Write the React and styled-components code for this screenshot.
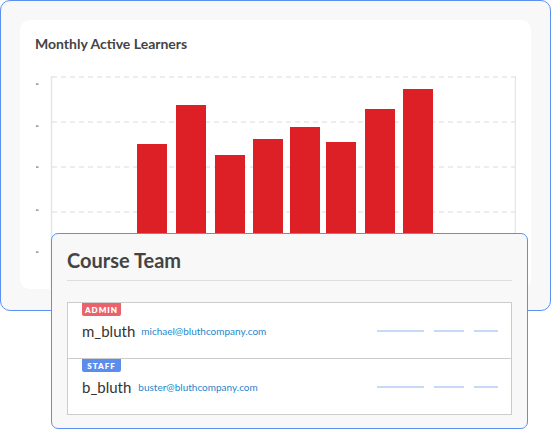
import React from "react";
import styled, { createGlobalStyle } from "styled-components";

const GlobalStyle = createGlobalStyle`
  html, body {
    margin: 0;
    padding: 0;
    background: #ffffff;
    font-family: Lato, "Open Sans", sans-serif;
  }
`;

const Page = styled.div`
  position: relative;
  width: 551px;
  height: 429px;
  overflow: hidden;
`;

const OuterCard = styled.div`
  box-sizing: border-box;
  width: 551px;
  height: 311px;
  padding: 19px;
  background: #f8f8f8;
  border: 1px solid #5b8ff0;
  border-radius: 10px;
`;

const ChartCard = styled.div`
  box-sizing: border-box;
  width: 511px;
  height: 269px;
  padding: 15px 15px 0;
  background: #ffffff;
  border-radius: 10px;
  overflow: hidden;
`;

const ChartTitle = styled.h3`
  margin: 0;
  font-size: 14px;
  line-height: 18px;
  font-weight: 700;
  color: #444444;
`;

const ChartSvg = styled.svg`
  display: block;
  margin-top: 16px;
`;

const TeamCard = styled.div`
  position: absolute;
  left: 51px;
  top: 233px;
  box-sizing: border-box;
  width: 477px;
  height: 196px;
  padding: 0 15px;
  background: #f8f8f8;
  border: 1px solid #5b8ff0;
  border-radius: 7px;
`;

const TeamTitle = styled.h2`
  margin: 0;
  padding: 15px 0 8px;
  font-size: 20px;
  line-height: 23px;
  font-weight: 700;
  color: #444444;
  border-bottom: 1px solid #dddddd;
`;

const Table = styled.div`
  margin-top: 21px;
  background: #ffffff;
  border: 1px solid #cccccc;
`;

const Row = styled.div`
  box-sizing: border-box;
  height: ${(p) => p.$h}px;
  padding: 0 13px 0 14px;
  border-top: ${(p) => (p.$first ? "none" : "1px solid #cccccc")};
`;

const Badge = styled.div`
  display: flex;
  align-items: center;
  justify-content: center;
  width: 39px;
  height: 13px;
  border-radius: 0 0 2px 2px;
  background: ${(p) => p.$color};
  color: #ffffff;
  font-size: 8px;
  font-weight: 800;
  letter-spacing: 1px;
`;

const Member = styled.div`
  display: flex;
  align-items: center;
  height: 20px;
  margin-top: 5px;
`;

const Name = styled.span`
  font-size: 15px;
  color: #333333;
`;

const Email = styled.span`
  margin-left: ${(p) => p.$gap}px;
  font-size: 10px;
  color: #1f86cc;
`;

const Dashes = styled.div`
  display: flex;
  gap: 10px;
  margin-left: auto;
`;

const Dash = styled.span`
  width: ${(p) => p.$w}px;
  height: 2px;
  background: #c6d9f6;
`;

const bars = [
  { x: 137, top: 145 },
  { x: 176, top: 106 },
  { x: 215, top: 156 },
  { x: 253, top: 140 },
  { x: 290, top: 128 },
  { x: 326, top: 143 },
  { x: 365, top: 110 },
  { x: 403, top: 90 },
];

const gridY = [78, 123, 168, 213, 258];
const ticksY = [85, 127, 168, 211, 253];

const Chart = () => (
  <ChartSvg width="481" height="220" viewBox="35 70 481 220">
    {gridY.map((y) => (
      <line
        key={y}
        x1="52"
        x2="515"
        y1={y}
        y2={y}
        stroke="#e8e8e8"
        strokeWidth="1.5"
        strokeDasharray="5 4"
      />
    ))}
    <line x1="51.5" x2="51.5" y1="77" y2="290" stroke="#e6e6e6" strokeWidth="1.5" />
    <line x1="515.5" x2="515.5" y1="77" y2="290" stroke="#e6e6e6" strokeWidth="1.5" />
    {ticksY.map((y) => (
      <rect key={y} x="36" y={y - 0.5} width="2.5" height="1.2" fill="#777777" />
    ))}
    {bars.map((b) => (
      <rect key={b.x} x={b.x} y={b.top} width="30" height={300 - b.top} fill="#dd1f26" />
    ))}
  </ChartSvg>
);

const members = [
  { role: "ADMIN", color: "#e8636b", name: "m_bluth", email: "michael@bluthcompany.com", gap: 6, h: 55 },
  { role: "STAFF", color: "#5b8def", name: "b_bluth", email: "buster@bluthcompany.com", gap: 7, h: 56 },
];

export default function App() {
  return (
    <Page>
      <GlobalStyle />
      <OuterCard>
        <ChartCard>
          <ChartTitle>Monthly Active Learners</ChartTitle>
          <Chart />
        </ChartCard>
      </OuterCard>
      <TeamCard>
        <TeamTitle>Course Team</TeamTitle>
        <Table>
          {members.map((m, i) => (
            <Row key={m.name} $first={i === 0} $h={m.h}>
              <Badge $color={m.color}>{m.role}</Badge>
              <Member>
                <Name>{m.name}</Name>
                <Email $gap={m.gap}>{m.email}</Email>
                <Dashes>
                  <Dash $w={47} />
                  <Dash $w={30} />
                  <Dash $w={24} />
                </Dashes>
              </Member>
            </Row>
          ))}
        </Table>
      </TeamCard>
    </Page>
  );
}
